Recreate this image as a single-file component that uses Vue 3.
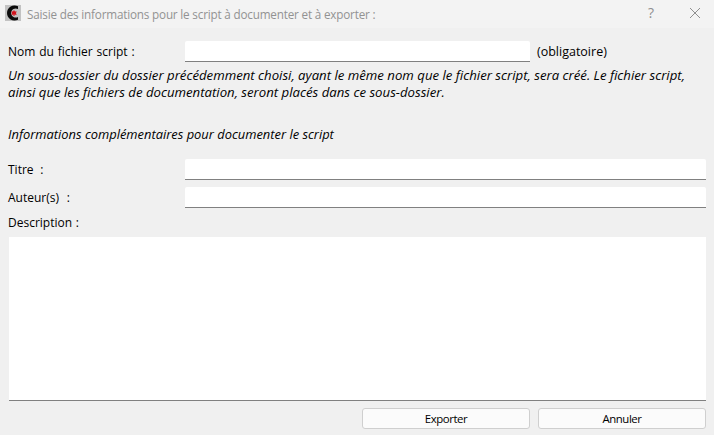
<script setup>
const lines = [
  'Un sous-dossier du dossier précédemment choisi, ayant le même nom que le fichier script, sera créé. Le fichier script,',
  'ainsi que les fichiers de documentation, seront placés dans ce sous-dossier.'
]
</script>

<template>
  <div class="dialog">
    <header class="titlebar">
      <svg class="logo" width="16" height="16" viewBox="0 0 16 16">
        <rect width="16" height="16" fill="#c2c2c2" />
        <path d="M13 1.2 A7.6 7.6 0 1 0 13 14.8 L13 12 A4.6 4.6 0 1 1 13 4 Z" fill="#0c0c0c" />
        <path d="M9 5 L10 6.4 L11.6 6.2 L11 8.2 L11.6 10 L9.5 9.6 L9.5 11 L8.5 11 L8.5 9.6 L6.4 10 L7 8.2 L6.4 6.2 L8 6.4 Z" fill="#d3121c" />
      </svg>
      <span class="title">Saisie des informations pour le script à documenter et à exporter :</span>
      <span class="help">?</span>
      <svg class="close" width="12" height="12" viewBox="0 0 12 12">
        <path d="M1 1 L11 11 M11 1 L1 11" stroke="#8f8f8f" stroke-width="1" fill="none" />
      </svg>
    </header>
    <main class="content">
      <div class="row">
        <label class="label ws-name">Nom du fichier script :</label>
        <div class="input short"></div>
        <span class="hint">(obligatoire)</span>
      </div>
      <p class="note">
        <span v-for="line in lines" :key="line" class="line">{{ line }}</span>
      </p>
      <p class="subhead">Informations complémentaires pour documenter le script</p>
      <div class="row">
        <label class="label ws-title">Titre :</label>
        <div class="input grow"></div>
      </div>
      <div class="row second">
        <label class="label ws-author">Auteur(s) :</label>
        <div class="input grow"></div>
      </div>
      <label class="label desc">Description :</label>
      <div class="textarea"></div>
      <footer class="actions">
        <button class="btn">Exporter</button>
        <button class="btn">Annuler</button>
      </footer>
    </main>
  </div>
</template>

<style>
html, body { margin: 0; background: #f0f0f0; }
</style>

<style scoped>
.dialog {
  width: 714px;
  height: 435px;
  background: #f0f0f0;
  font-family: "Open Sans", "Noto Sans", sans-serif;
  font-size: 12px;
  color: #000;
  overflow: hidden;
}
.titlebar {
  height: 28px;
  background: #f3f3f3;
  display: flex;
  align-items: center;
  padding-left: 5px;
  box-sizing: border-box;
}
.logo { flex: none; align-self: flex-start; margin-top: 5px; }
.title { margin-left: 6px; color: #929292; flex: 1; white-space: nowrap; font-size: 11.7px; letter-spacing: -0.18px; }
.help { color: #8f8f8f; font-size: 14px; margin: 0 35px 3px 0; }
.close { margin: 0 13px 2px 0; }
.content {
  padding: 13px 8px 0 8px;
  display: flex;
  flex-direction: column;
}
.row { display: flex; align-items: center; height: 21px; }
.second { margin-top: 7px; }
.label { width: 177px; flex: none; white-space: nowrap; word-spacing: 0.5px; }
.ws-name { word-spacing: 0.75px; }
.ws-title { word-spacing: 3.5px; }
.ws-author { word-spacing: 4.5px; }
.input {
  height: 20px;
  background: #fff;
  border-bottom: 1px solid #808080;
  border-radius: 2px 2px 0 0;
}
.short { width: 345px; }
.grow { flex: 1; }
.hint { margin-left: 7px; white-space: nowrap; font-size: 12.5px; }
.note {
  margin: 5px 0 0;
  font-style: italic;
  font-size: 13.2px;
  line-height: 17px;
}
.line { display: block; white-space: nowrap; }
.subhead { margin: 25px 0 17px; font-style: italic; font-size: 12.9px; line-height: 16px; height: 16px; }
.desc { line-height: 16px; margin-top: 7px; }
.textarea {
  margin: 6px 0 0 1px;
  height: 163px;
  background: #fff;
  border-bottom: 1px solid #808080;
}
.actions { display: flex; justify-content: flex-end; gap: 8px; margin-top: 7px; }
.btn {
  width: 168px;
  height: 21px;
  padding: 0;
  background: #fbfbfb;
  border: 1px solid #cfcfcf;
  border-radius: 3px;
  font-family: inherit;
  font-size: 11.4px;
  letter-spacing: -0.45px;
  color: #000;
}
</style>
